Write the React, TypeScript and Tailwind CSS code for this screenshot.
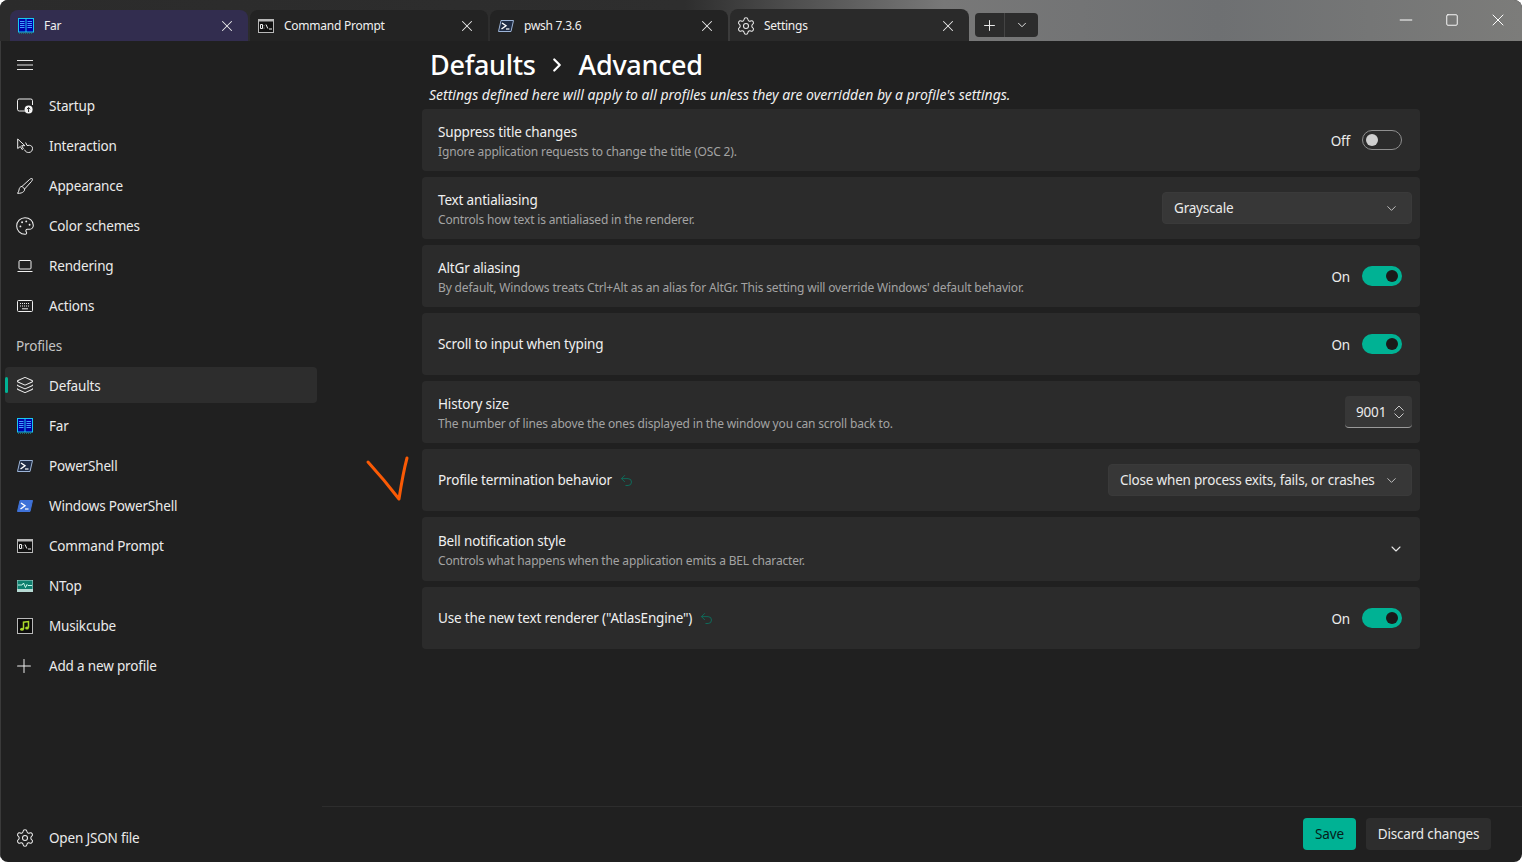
import { ChevronDown, ChevronRight, Layers, Minus, Palette, Plus, Settings, Square, Undo2, X } from "lucide-react";
import type { ReactNode } from "react";

const font = { fontFamily: '"Noto Sans", sans-serif' };

function FarIcon({ size = 16 }: { size?: number }) {
  return (
    <svg width={size} height={size} viewBox="0 0 16 16">
      <rect x="0.5" y="0.5" width="15" height="13.5" fill="#0000a8" stroke="#19c8f0" />
      <line x1="8" y1="1" x2="8" y2="14" stroke="#19c8f0" />
      <path d="M2 3.5h4.5M2 5.5h4.5M2 7.5h4.5M2 9.5h4.5M9.5 3.5H14M9.5 5.5H14M9.5 7.5H14M9.5 9.5H14" stroke="#3fa0ff" />
      <path d="M1 15.5h14" stroke="#1f6f6f" strokeDasharray="1 1" />
    </svg>
  );
}

function PwshIcon({ blue = false }: { blue?: boolean }) {
  return (
    <svg width="16" height="16" viewBox="0 0 16 16">
      <path d="M3 2.5h12.5L13 13.5H.5z" fill={blue ? "#3f72d8" : "#1f2c45"} stroke={blue ? "#3f72d8" : "#9db4d6"} />
      <path d="M4 5l4 2.8L3.5 11" fill="none" stroke="#fff" strokeWidth="1.4" />
      <path d="M8 11h3.5" stroke="#fff" strokeWidth="1.2" />
    </svg>
  );
}

function CmdIcon() {
  return (
    <svg width="16" height="16" viewBox="0 0 16 16">
      <rect x="0.5" y="1.5" width="15" height="13" fill="#111" stroke="#b8b8b8" />
      <rect x="0" y="1" width="16" height="2.5" fill="#b8b8b8" />
      <path d="M2.5 6.5h2v4h-2zM6 7.5v.7M6 9.7v.7M8 6.5l1.8 4M11 11h3" fill="none" stroke="#eee" />
    </svg>
  );
}

function NtopIcon() {
  return (
    <svg width="16" height="16" viewBox="0 0 16 16">
      <rect x="0" y="2" width="16" height="12" fill="#b6d9d3" />
      <rect x="0.5" y="2.5" width="15" height="8.5" fill="#0e7f6e" />
      <path d="M1 7h4l1.5-2 2 4.5L10 6.5l1 1h4" fill="none" stroke="#d8fff4" strokeWidth="0.9" />
    </svg>
  );
}

function MusikIcon() {
  return (
    <svg width="16" height="16" viewBox="0 0 16 16">
      <rect x="0.5" y="0.5" width="15" height="15" fill="#0c0c0c" stroke="#b9b9b9" />
      <path d="M6.5 11V4.2l5-.7v6.2" fill="none" stroke="#a8d82a" strokeWidth="1.5" />
      <ellipse cx="5" cy="11.3" rx="1.9" ry="1.5" fill="#a8d82a" />
      <ellipse cx="10" cy="10" rx="1.9" ry="1.5" fill="#a8d82a" />
    </svg>
  );
}

function StartupIcon() {
  return (
    <svg width="16" height="16" viewBox="0 0 16 16" fill="none">
      <path d="M8 13H2.2A1.7 1.7 0 0 1 .5 11.3V2.7A1.7 1.7 0 0 1 2.2 1h11.6a1.7 1.7 0 0 1 1.7 1.7V7" stroke="#eee" />
      <circle cx="11.6" cy="11.6" r="4" fill="#f5f5f5" />
      <path d="M11.6 14V9.6M9.9 11.2l1.7-1.7 1.7 1.7" stroke="#202020" />
    </svg>
  );
}

function InteractionIcon() {
  return (
    <svg width="16" height="16" viewBox="0 0 16 16" fill="none" stroke="#eee">
      <path d="M.7 1v9.5l2.6-2 1.8 3 1.3-.8-1.7-3h3.2z" />
      <path d="M8.6 4.5l1.4 3 2.6-.2c1.6.3 2.9 1.2 2.9 3 0 2.6-1.5 4.2-3.8 4.2-1.9 0-3.4-.9-4.2-2.8" />
    </svg>
  );
}

function BrushIcon() {
  return (
    <svg width="16" height="16" viewBox="0 0 16 16" fill="none" stroke="#eee">
      <path d="M15.3.7c.4 1-.2 2-1 3L7.6 11 5 8.4 12.3 1.7c1-.9 2.4-1.6 3-1z" />
      <path d="M5 8.4C3 8.6 2.3 10 2 12c-.2 1.3-.7 2.4-1.5 3.3 2.8.2 5-.5 6.2-1.8.8-.8 1-1.6.9-2.5" />
    </svg>
  );
}

function LaptopIcon() {
  return (
    <svg width="16" height="16" viewBox="0 0 16 16" fill="none" stroke="#eee">
      <rect x="2" y="2.5" width="12" height="8.5" rx="1" />
      <path d="M.5 13.5h15" />
    </svg>
  );
}

function KeyboardIcon() {
  return (
    <svg width="16" height="16" viewBox="0 0 16 16" fill="none" stroke="#eee">
      <rect x="0.5" y="2.5" width="15" height="11" rx="1" />
      <path d="M3 5.5h10M3 8h10" strokeDasharray="1 1" />
      <path d="M5 10.8h6" />
    </svg>
  );
}

function MenuIcon() {
  return (
    <svg width="16" height="12" viewBox="0 0 16 12" fill="none" stroke="#e6e6e6">
      <path d="M0 1.5h16M0 6h16M0 10.5h16" />
    </svg>
  );
}

function NavItem({ icon, label, active }: { icon: ReactNode; label: string; active?: boolean }) {
  return (
    <div className={`relative ml-1 flex h-9 w-[312px] items-center rounded pl-3 text-[13.5px] tracking-[-0.17px] text-[#ebebeb] ${active ? "-mt-px mb-[5px] bg-[#2d2d2d]" : "mb-1"}`}>
      {active && <span className="absolute left-0 top-[10px] h-4 w-[3px] rounded bg-[#00b294]" />}
      <span className="flex w-4 shrink-0 items-center justify-center">{icon}</span>
      <span className={`ml-4 ${active ? "pt-[2px]" : ""}`}>{label}</span>
    </div>
  );
}

function Tab({ icon, label, active, tint }: { icon: ReactNode; label: string; active?: boolean; tint?: boolean }) {
  const bg = active ? "w-[239px] bg-[#2a2a2a] h-[32px] pt-px" : tint ? "w-[238px] bg-[#322d4f] h-[31px]" : "w-[238px] bg-[#232323] h-[31px]";
  return (
    <div className={`flex shrink-0 items-center rounded-t-lg pl-2 pr-[12px] text-xs tracking-[-0.25px] text-[#f0f0f0] ${bg}`}>
      <span className="flex w-4 shrink-0 items-center justify-center">{icon}</span>
      <span className="ml-[10px] flex-1">{label}</span>
      <X className="h-[18px] w-[18px] text-[#ececec]" strokeWidth={1.35} />
    </div>
  );
}

function Toggle({ on }: { on: boolean }) {
  return (
    <div className="flex items-center gap-3 pr-[10px]">
      <span className="pt-[2px] text-[13.5px] tracking-[-0.17px] text-[#ededed]">{on ? "On" : "Off"}</span>
      {on ? (
        <span className="flex h-5 w-10 items-center justify-end rounded-full bg-[#00b294] pr-1">
          <span className="h-3 w-3 rounded-full bg-[#1a1a1a]" />
        </span>
      ) : (
        <span className="flex h-5 w-10 items-center rounded-full border border-[#8f8f8f] pl-[3px]">
          <span className="h-3 w-3 rounded-full bg-[#cfcfcf]" />
        </span>
      )}
    </div>
  );
}

function Dropdown({ label, width }: { label: string; width: string }) {
  return (
    <div className={`flex h-8 items-center justify-between whitespace-nowrap rounded border border-[#3a3a3a] bg-[#373737] pl-[11px] pr-[12px] text-[13.5px] tracking-[-0.2px] text-[#ebebeb] ${width}`}>
      <span>{label}</span>
      <ChevronDown className="h-[15px] w-[15px] text-[#c8c8c8]" strokeWidth={1.5} />
    </div>
  );
}

function Card({ title, desc, revert, height = "h-[62px]", children }: { title: string; desc?: string; revert?: boolean; height?: string; children: ReactNode }) {
  return (
    <div className={`flex w-[998px] items-center justify-between rounded bg-[#2b2b2b] pl-4 pr-2 ${height}`}>
      <div className={desc ? "pt-[2px]" : ""}>
        <div className="flex items-center text-[13.5px] tracking-[-0.17px] text-[#f0f0f0]">
          {title}
          {revert && <Undo2 className="ml-[7px] h-[15px] w-[15px] text-[#0f6a5a]" strokeWidth={1.6} />}
        </div>
        {desc && <div className="mt-px text-xs tracking-[-0.16px] text-[#a3a3a3]">{desc}</div>}
      </div>
      {children}
    </div>
  );
}

export default function App() {
  return (
    <div style={font} className="flex h-[862px] w-[1522px] flex-col overflow-hidden rounded-lg bg-[#202020]">
      {/* title bar */}
      <div className="flex h-[41px] shrink-0 items-end bg-[linear-gradient(90deg,#2b2b2b_0%,#2e2e2e_45%,#4e4e4e_52%,#787878_62%,#6e7072_80%,#7c7c7a_100%)] pl-[10px]">
        <div className="flex items-end gap-[2px]">
          <Tab tint icon={<FarIcon />} label="Far" />
          <Tab icon={<CmdIcon />} label="Command Prompt" />
          <Tab icon={<PwshIcon />} label="pwsh 7.3.6" />
          <Tab active icon={<Settings className="h-5 w-5 shrink-0 text-[#ececec]" strokeWidth={1.25} />} label="Settings" />
        </div>
        <div className="mb-1 ml-[6px] flex h-6 w-[63px] items-center rounded bg-[#2c2c2c] text-[#ececec]">
          <div className="flex h-full w-[30px] items-center justify-center border-r border-[#444]">
            <Plus className="h-[17px] w-[17px]" strokeWidth={1.4} />
          </div>
          <div className="flex flex-1 items-center justify-center">
            <ChevronDown className="h-[14px] w-[14px]" strokeWidth={1.6} />
          </div>
        </div>
        <div className="mb-[11px] ml-auto flex h-5 items-center gap-[26px] pr-[14px] text-white">
          <Minus className="h-5 w-5" strokeWidth={1.2} />
          <Square className="h-5 w-5 p-[3px]" strokeWidth={1.6} />
          <X className="h-5 w-5" strokeWidth={1.2} />
        </div>
      </div>

      <div className="flex min-h-0 flex-1 border-l border-[#3a3a3a]">
        {/* sidebar */}
        <aside className="flex w-[321px] shrink-0 flex-col">
          <div className="flex h-12 items-center pl-4">
            <MenuIcon />
          </div>
          <div className="mt-[-1px]">
            <NavItem icon={<StartupIcon />} label="Startup" />
            <NavItem icon={<InteractionIcon />} label="Interaction" />
            <NavItem icon={<BrushIcon />} label="Appearance" />
            <NavItem icon={<Palette className="h-5 w-5 shrink-0 text-[#eee]" strokeWidth={1.25} />} label="Color schemes" />
            <NavItem icon={<LaptopIcon />} label="Rendering" />
            <NavItem icon={<KeyboardIcon />} label="Actions" />
          </div>
          <div className="flex h-10 items-center pb-1 pl-[15px] text-[13.5px] tracking-[-0.17px] text-[#c4c4c4]">Profiles</div>
          <NavItem active icon={<Layers className="h-[18px] w-[18px] shrink-0 text-[#eee]" strokeWidth={1.4} />} label="Defaults" />
          <NavItem icon={<FarIcon />} label="Far" />
          <NavItem icon={<PwshIcon />} label="PowerShell" />
          <NavItem icon={<PwshIcon blue />} label="Windows PowerShell" />
          <NavItem icon={<CmdIcon />} label="Command Prompt" />
          <NavItem icon={<NtopIcon />} label="NTop" />
          <NavItem icon={<MusikIcon />} label="Musikcube" />
          <NavItem icon={<Plus className="h-[22px] w-[22px] shrink-0 -translate-x-px text-[#eee]" strokeWidth={1.1} />} label="Add a new profile" />
          <div className="mt-auto mb-[2px]">
            <NavItem icon={<Settings className="h-5 w-5 shrink-0 text-[#eee]" strokeWidth={1.25} />} label="Open JSON file" />
          </div>
        </aside>

        {/* content */}
        <main className="relative flex min-w-0 flex-1 flex-col">
          <div className="flex-1 pl-[100px]">
            <div className="mt-1 flex h-10 items-center pl-2 text-[27px] font-medium tracking-[-0.3px] text-white">
              <span>Defaults</span>
              <ChevronRight className="ml-[10px] mr-[11px] h-[22px] w-[22px]" strokeWidth={2.4} />
              <span>Advanced</span>
            </div>
            <div className="mb-[5px] h-[19px] pl-[7px] text-sm italic leading-[19px] text-[#f0f0f0]">
              Settings defined here will apply to all profiles unless they are overridden by a profile's settings.
            </div>
            <div className="flex flex-col gap-[6px]">
              <Card title="Suppress title changes" desc="Ignore application requests to change the title (OSC 2).">
                <Toggle on={false} />
              </Card>
              <Card title="Text antialiasing" desc="Controls how text is antialiased in the renderer.">
                <Dropdown label="Grayscale" width="w-[250px]" />
              </Card>
              <Card title="AltGr aliasing" desc="By default, Windows treats Ctrl+Alt as an alias for AltGr. This setting will override Windows' default behavior.">
                <Toggle on />
              </Card>
              <Card title="Scroll to input when typing">
                <Toggle on />
              </Card>
              <Card title="History size" desc="The number of lines above the ones displayed in the window you can scroll back to.">
                <div className="flex h-8 w-[67px] items-center justify-between rounded border-b border-b-[#9a9a9a] bg-[#373737] pl-[11px] pr-[8px] text-[13.5px] tracking-[-0.17px] text-[#ebebeb]">
                  <span className="pt-[2px]">9001</span>
                  <svg width="10" height="14" viewBox="0 0 10 14" fill="none" stroke="#c8c8c8">
                    <path d="M.5 5.5L5 1l4.5 4.5M.5 8.5L5 13l4.5-4.5" />
                  </svg>
                </div>
              </Card>
              <Card title="Profile termination behavior" revert>
                <Dropdown label="Close when process exits, fails, or crashes" width="w-[304px]" />
              </Card>
              <Card title="Bell notification style" desc="Controls what happens when the application emits a BEL character." height="h-[64px]">
                <ChevronDown className="mr-[8px] h-4 w-4 text-[#e6e6e6]" strokeWidth={1.6} />
              </Card>
              <Card title={'Use the new text renderer ("AtlasEngine")'} revert>
                <Toggle on />
              </Card>
            </div>
          </div>

          <div className="flex h-[56px] shrink-0 items-start justify-end gap-[10px] border-t border-[#2d2d2d] pr-[31px] pt-[11px] text-[13.5px] tracking-[-0.17px]">
            <button className="flex h-8 w-[53px] items-center justify-center rounded bg-[#00b294] text-[#062019]">Save</button>
            <button className="flex h-8 w-[125px] items-center justify-center rounded bg-[#2d2d2d] text-[#ebebeb]">Discard changes</button>
          </div>

          {/* hand-drawn annotation over the page */}
          <svg className="absolute left-[40px] top-[412px]" width="50" height="52" viewBox="0 0 50 52" fill="none">
            <path d="M6 9 C 16 20, 27 33, 37 46 C 39 33, 41 20, 45 5" stroke="#fa5a05" strokeWidth="3" strokeLinecap="round" strokeLinejoin="round" />
          </svg>
        </main>
      </div>
    </div>
  );
}
